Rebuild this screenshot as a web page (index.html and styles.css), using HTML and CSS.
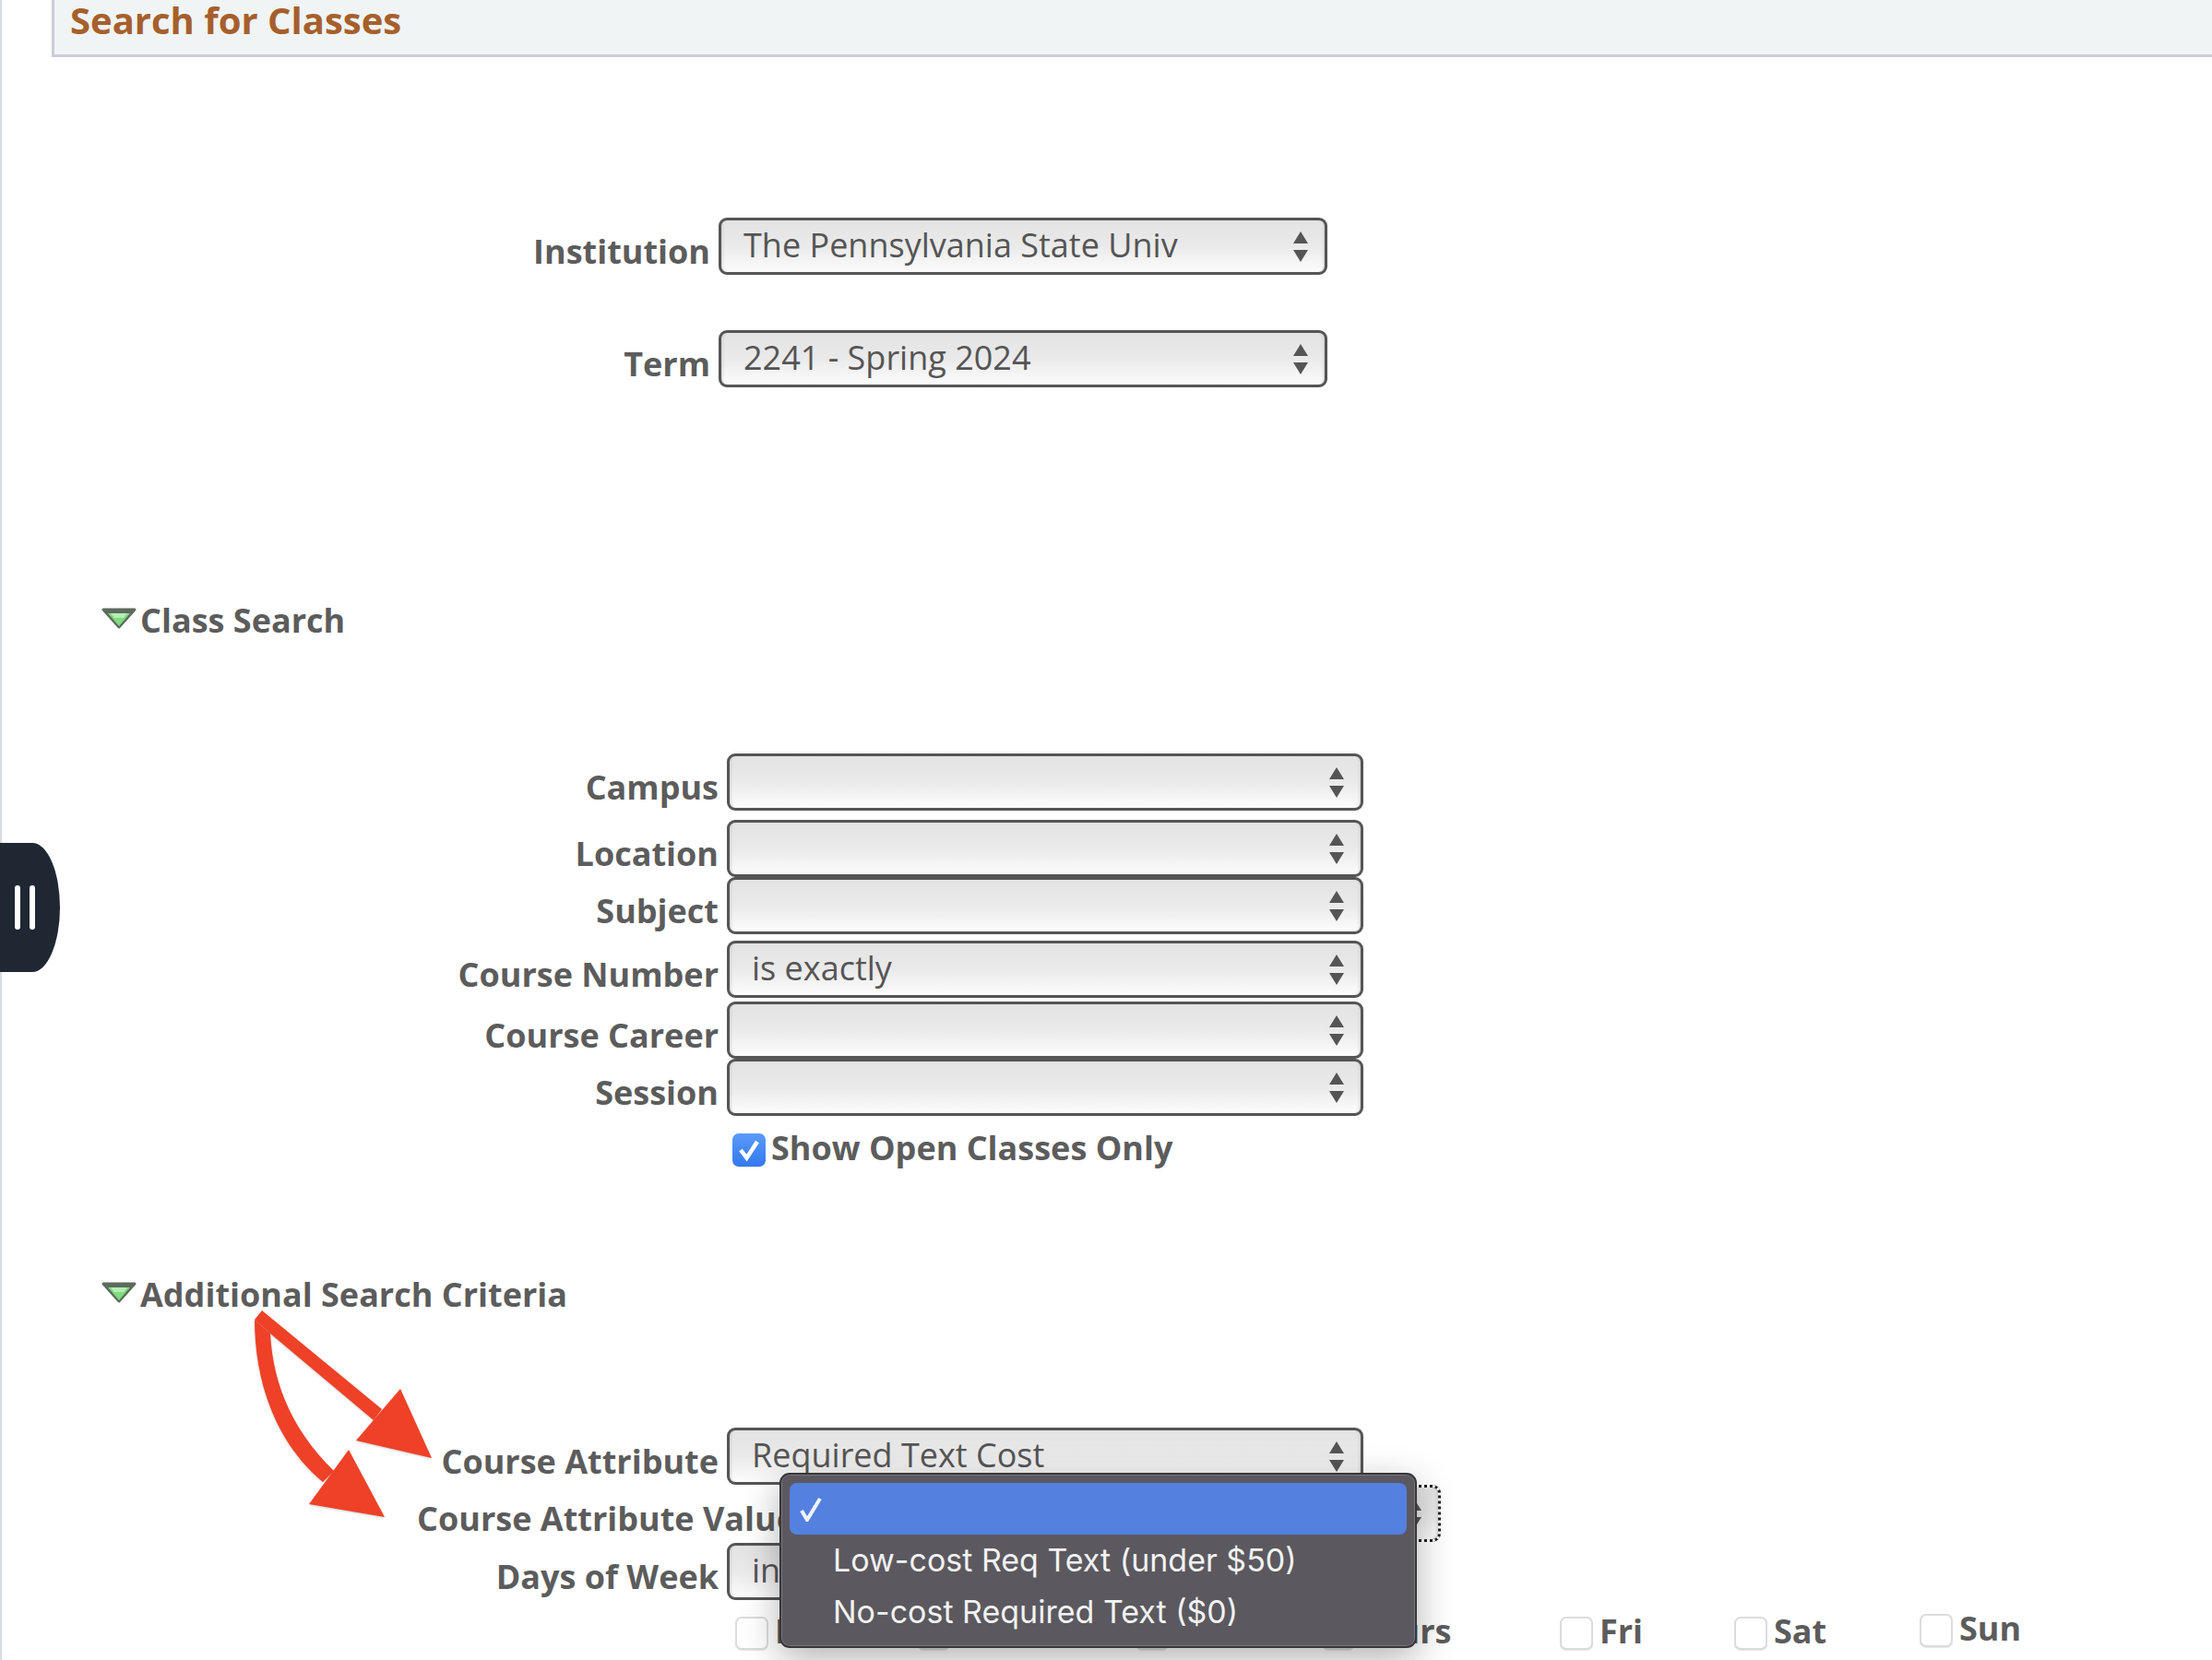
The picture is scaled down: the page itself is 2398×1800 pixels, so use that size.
FILE: index.html
```html
<!DOCTYPE html>
<html lang="en">
<head>
<meta charset="utf-8">
<title>Search for Classes</title>
<link rel="stylesheet" href="styles.css">
</head>
<body>
<svg class="defs" width="0" height="0" aria-hidden="true">
  <symbol id="updown" viewBox="0 0 16 33"><path d="M8 0L16 13H0Z M0 20H16L8 33Z" fill="#555"/></symbol>
  <symbol id="disclosure" viewBox="0 0 38 23">
    <path d="M2 2H36L19 21Z" fill="#5d6b5d" stroke="#5d6b5d" stroke-width="3" stroke-linejoin="round"/>
    <path d="M7 6H31L19 20Z" fill="#7fdc7f"/>
    <path d="M10 6H28L24 11H14Z" fill="#b5eeb5"/>
  </symbol>
</svg>
<div class="page">
  <header class="title-bar"><h1 class="title">Search for Classes</h1></header>

  <section class="group-top">
    <div class="row row-top">
      <span class="label">Institution</span>
      <div class="select"><span class="value">The Pennsylvania State Univ</span><svg class="arrows"><use href="#updown"/></svg></div>
    </div>
    <div class="row row-top row-term">
      <span class="label">Term</span>
      <div class="select"><span class="value">2241 - Spring 2024</span><svg class="arrows"><use href="#updown"/></svg></div>
    </div>
  </section>

  <h2 class="section-head head-class"><svg class="tri"><use href="#disclosure"/></svg>Class Search</h2>

  <section class="group">
    <div class="row"><span class="label">Campus</span><div class="select"><span class="value"></span><svg class="arrows"><use href="#updown"/></svg></div></div>
    <div class="row gap-10"><span class="label">Location</span><div class="select"><span class="value"></span><svg class="arrows"><use href="#updown"/></svg></div></div>
    <div class="row"><span class="label">Subject</span><div class="select"><span class="value"></span><svg class="arrows"><use href="#updown"/></svg></div></div>
    <div class="row gap-7"><span class="label">Course Number</span><div class="select"><span class="value">is exactly</span><svg class="arrows"><use href="#updown"/></svg></div></div>
    <div class="row gap-4"><span class="label">Course Career</span><div class="select"><span class="value"></span><svg class="arrows"><use href="#updown"/></svg></div></div>
    <div class="row"><span class="label">Session</span><div class="select"><span class="value"></span><svg class="arrows"><use href="#updown"/></svg></div></div>
    <div class="open-only">
      <span class="check check-on"><svg viewBox="0 0 36 36"><path d="M9 18L15.500 26.500L27 9" fill="none" stroke="#fff" stroke-width="4.500"/></svg></span>
      <span class="check-label check-label-open">Show Open Classes Only</span>
    </div>
  </section>

  <h2 class="section-head head-extra"><svg class="tri"><use href="#disclosure"/></svg>Additional Search Criteria</h2>

  <section class="group group-extra">
    <div class="row"><span class="label">Course Attribute</span><div class="select"><span class="value">Required Text Cost</span><svg class="arrows"><use href="#updown"/></svg></div></div>
    <div class="row"><span class="label label-long">Course Attribute Value</span><div class="select select-focus"><span class="value"></span><svg class="arrows"><use href="#updown"/></svg></div></div>
    <div class="row gap-1"><span class="label">Days of Week</span><div class="select"><span class="value">include only these days</span><svg class="arrows"><use href="#updown"/></svg></div></div>
    <div class="days">
      <label class="day day-mon"><span class="check"></span><span class="check-label">Mon</span></label>
      <label class="day day-tue"><span class="check"></span><span class="check-label">Tues</span></label>
      <label class="day day-wed"><span class="check"></span><span class="check-label">Wed</span></label>
      <label class="day day-thu"><span class="check"></span><span class="check-label">Thurs</span></label>
      <label class="day day-fri"><span class="check"></span><span class="check-label">Fri</span></label>
      <label class="day day-sat"><span class="check"></span><span class="check-label">Sat</span></label>
      <label class="day day-sun"><span class="check"></span><span class="check-label">Sun</span></label>
    </div>
  </section>

  <div class="side-tab"><span class="side-bar"></span><span class="side-bar"></span></div>

  <svg class="annotation" viewBox="0 0 220 240" aria-hidden="true">
    <g fill="#ee4127">
      <path d="M14 1L144 108L135 120L23 26L6 11Z"/>
      <path d="M198 161L164 86L116 142Z"/>
      <path d="M6 11L23 26C26 80 46 130 92 175L80 187C24 140 6 70 6 11Z"/>
      <path d="M147 225L108 152L65 211Z"/>
    </g>
  </svg>

  <div class="menu">
    <div class="menu-item menu-item-on"><svg class="menu-check" viewBox="0 0 26 27"><path d="M3 15L9 25L23 2" fill="none" stroke="#f1f4fc" stroke-width="4"/></svg></div>
    <div class="menu-item">Low-cost Req Text (under $50)</div>
    <div class="menu-item">No-cost Required Text ($0)</div>
  </div>
</div>
</body>
</html>
```
FILE: styles.css
```css
* { box-sizing: border-box; }
html, body { margin: 0; padding: 0; background: #fff; }
.defs { display: block; height: 0; }
.page {
  position: relative;
  width: 2398px;
  height: 1800px;
  overflow: hidden;
  background: #fff linear-gradient(#d4dae0, #d4dae0) 0 0 / 2px 100% no-repeat;
  font-family: "Open Sans", sans-serif;
  color: #5c5c5c;
}
.title-bar {
  height: 62px;
  margin-left: 56px;
  padding: 1px 0 0 17px;
  background: #f0f4f5;
  border-left: 3px solid #cacdd7;
  border-bottom: 3px solid #cacdd7;
}
.title {
  margin: 0;
  font-size: 40px;
  line-height: 42px;
  font-weight: 700;
  color: #a65f2c;
}
.group-top { margin-top: 174px; }
.row { display: flex; align-items: flex-start; gap: 9px; }
.row-term { margin-top: 60px; }
.gap-1 { margin-top: 1px; }
.gap-4 { margin-top: 4px; }
.gap-7 { margin-top: 7px; }
.gap-10 { margin-top: 10px; }
.label {
  flex: none;
  width: 779px;
  padding-top: 19px;
  text-align: right;
  font-size: 36px;
  line-height: 36px;
  font-weight: 700;
  white-space: nowrap;
}
.label-long { width: 863px; }
.row-top .label { width: 770px; }
.select {
  flex: none;
  position: relative;
  display: flex;
  align-items: center;
  justify-content: space-between;
  width: 690px;
  height: 62px;
  padding: 0 18px 2px 24px;
  border: 3px solid #555;
  border-radius: 9px;
  background: linear-gradient(#e3e3e3, #eaeaea 50%, #fcfcfc);
  box-shadow: inset 3px 0 3px -2px #ccc, inset -3px 0 3px -2px #ccc;
}
.row-top .select { width: 660px; }
.select-focus { border-color: #222; outline: 3px dotted #fff; outline-offset: -3px; }
.value { font-size: 36px; line-height: 36px; color: #555; white-space: nowrap; }
.arrows { flex: none; width: 16px; height: 33px; margin-top: 2px; }
.section-head {
  display: flex;
  align-items: flex-start;
  gap: 4px;
  margin: 0;
  padding-left: 110px;
  font-size: 36px;
  line-height: 36px;
  font-weight: 700;
}
.head-class { margin-top: 235px; }
.head-extra { margin-top: 121px; }
.tri { flex: none; width: 38px; height: 23px; margin-top: 4px; }
.group { margin-top: 126px; }
.open-only { display: flex; align-items: flex-start; gap: 6px; margin: 16px 0 0 794px; height: 39px; }
.check {
  flex: none;
  display: block;
  width: 36px;
  height: 36px;
  margin-top: 2px;
  border: 2px solid #dcdcdc;
  border-radius: 7px;
  background: #fff;
  box-shadow: 0 1px 1px #e6e6e6;
}
.check-on {
  margin-top: 3px;
  border: 0;
  background: linear-gradient(#5a9bfa, #3378f0);
}
.check-on svg { display: block; width: 36px; height: 36px; }
.check-label { font-size: 36px; line-height: 36px; font-weight: 700; white-space: nowrap; }
.check-label-open { padding-top: 1px; }
.days { display: flex; align-items: flex-start; margin: 16px 0 0 797px; }
.day { flex: none; display: flex; align-items: flex-start; gap: 7px; }
.day-mon { width: 197px; }
.day-tue { width: 237px; }
.day-wed { width: 202px; }
.day-thu { width: 258px; gap: 2px; }
.day-fri { width: 189px; }
.day-sat { width: 201px; }
.day-sun { margin-top: -3px; }
.side-tab {
  position: absolute;
  left: 0;
  top: 914px;
  width: 65px;
  height: 140px;
  display: flex;
  align-items: center;
  gap: 10px;
  padding-left: 16px;
  background: #1f2733;
  border-radius: 0 30px 30px 0 / 0 70px 70px 0;
}
.side-bar { width: 6px; height: 48px; border-radius: 3px; background: #fff; }
.annotation {
  position: absolute;
  left: 270px;
  top: 1420px;
  width: 220px;
  height: 240px;
  filter: drop-shadow(0 1px 1px rgba(0,0,0,.2));
}
.menu {
  position: absolute;
  left: 845px;
  top: 1597px;
  width: 691px;
  height: 190px;
  padding: 9px 9px 0;
  background: #5b595f;
  border: 2px solid #37373a;
  border-radius: 11px;
  box-shadow: inset 0 0 0 1px rgba(255,255,255,.18), 0 12px 40px rgba(0,0,0,.3);
}
.menu-item {
  height: 56px;
  padding: 0 0 2px 47px;
  display: flex;
  align-items: center;
  font-family: "Inter", sans-serif;
  font-size: 34px;
  color: #f2f2f2;
  border-radius: 8px;
  white-space: nowrap;
}
.menu-item-on { position: relative; background: #5480e0; }
.menu-check { position: absolute; left: 10px; top: 15px; width: 26px; height: 27px; }
```
